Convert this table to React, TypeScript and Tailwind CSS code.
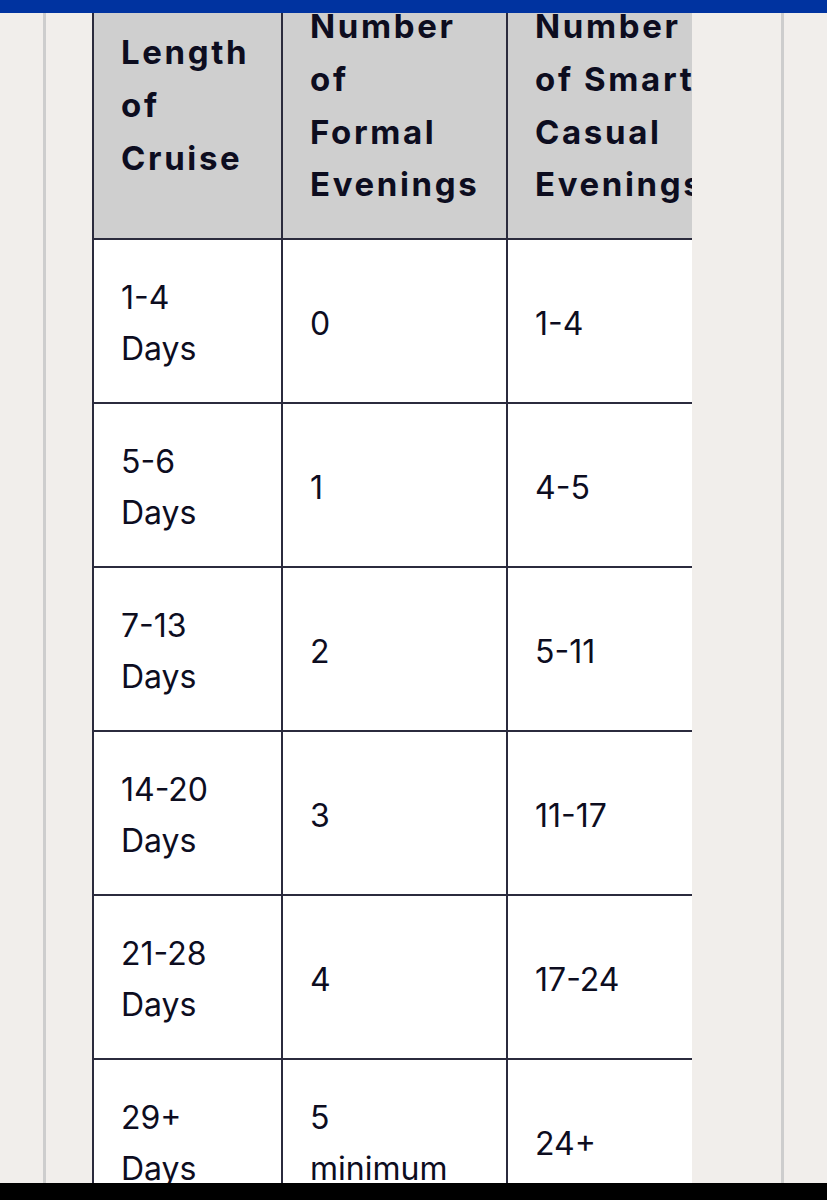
import type { ReactNode } from "react";

type Row = {
  length: ReactNode;
  formal: ReactNode;
  casual: ReactNode;
};

const rows: Row[] = [
  { length: <>1-4<br />Days</>, formal: "0", casual: "1-4" },
  { length: <>5-6<br />Days</>, formal: "1", casual: "4-5" },
  { length: <>7-13<br />Days</>, formal: "2", casual: "5-11" },
  { length: <>14-20<br />Days</>, formal: "3", casual: "11-17" },
  { length: <>21-28<br />Days</>, formal: "4", casual: "17-24" },
  { length: <>29+<br />Days</>, formal: <>5<br />minimum</>, casual: "24+" },
];

const th =
  "border-2 border-[#2b2b3d] bg-[#cfcfcf] px-[27px] pt-[33px] pb-[27px] text-left align-middle text-[33px] font-bold leading-[1.6] tracking-[0.08em]";
const td =
  "border-2 border-[#2b2b3d] bg-white px-[27px] pt-[32px] pb-[28px] text-left align-middle text-[32px] font-normal leading-[51px]";

export default function App() {
  return (
    <div className="relative h-[1200px] overflow-hidden bg-[#f1eeeb] font-['Inter','Lato',sans-serif] text-[#0d0d1f]">
      <div className="mx-[43px] flex h-full flex-col border-x-[3px] border-[#cdcdcd] pl-[46px]">
        <div className="-mt-[35px] w-[600px] overflow-hidden">
          <table className="w-[660px] table-fixed border-collapse">
            <colgroup>
              <col className="w-[189px]" />
              <col className="w-[225px]" />
              <col className="w-[246px]" />
            </colgroup>
            <thead>
              <tr>
                <th className={th}>
                  Length
                  <br />
                  of
                  <br />
                  Cruise
                </th>
                <th className={th}>
                  Number
                  <br />
                  of
                  <br />
                  Formal
                  <br />
                  Evenings
                </th>
                <th className={th}>
                  Number
                  <br />
                  of Smart
                  <br />
                  Casual
                  <br />
                  Evenings
                </th>
              </tr>
            </thead>
            <tbody>
              {rows.map((r, i) => (
                <tr key={i}>
                  <td className={td}>{r.length}</td>
                  <td className={td}>{r.formal}</td>
                  <td className={td}>{r.casual}</td>
                </tr>
              ))}
            </tbody>
          </table>
        </div>
      </div>

      {/* fixed site header strip */}
      <div className="absolute inset-x-0 top-0 h-[13px] bg-[#0033a0]" />
      {/* browser nav bar */}
      <div className="absolute inset-x-0 bottom-0 h-[17px] bg-black" />
    </div>
  );
}
